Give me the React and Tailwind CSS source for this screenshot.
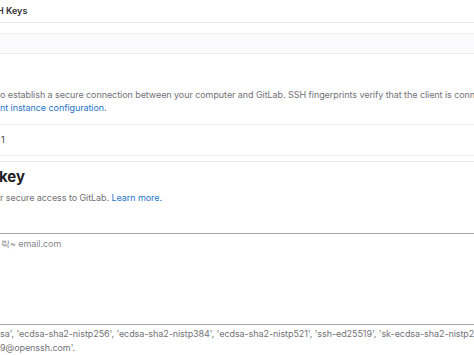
export default function App() {
  return (
    <div className="w-[474px] h-[355px] overflow-hidden bg-white font-['Inter',sans-serif] text-[#3a383f]">
      {/* breadcrumb */}
      <div className="h-[23px] flex items-center border-b border-[#ececef]">
        <span className="-ml-[3px] text-[9px] font-semibold text-[#333238] whitespace-nowrap">H Keys</span>
      </div>
      <div className="mt-[10px] h-[21px] bg-[#fbfafd] border-y border-[#ececef]" />

      {/* intro */}
      <div className="mt-[34px] text-[9px] leading-[13px] tracking-[-0.07px] text-[#737278] whitespace-nowrap">
        <p>o establish a secure connection between your computer and GitLab. SSH fingerprints verify that the client is conn</p>
        <p>
          <span className="text-[#1f75cb]">nt instance configuration</span>.
        </p>
      </div>

      {/* keys row */}
      <div className="mt-[10px] h-[32px] flex items-center border-y border-[#ececef] text-[9px] text-[#3a383f]">
        <span className="ml-[1px]">1</span>
      </div>

      {/* add key */}
      <div className="mt-[5px] border-t border-[#ececef] pt-[5px]">
        <h2 className="text-[15px] leading-[20px] font-bold text-[#1f1e24] -ml-[1px] whitespace-nowrap">key</h2>
        <p className="mt-[4px] text-[9px] leading-[13px] tracking-[-0.07px] text-[#737278] whitespace-nowrap">
          r secure access to GitLab. <span className="text-[#1f75cb]">Learn more.</span>
        </p>
        <div className="mt-[29px] -ml-[10px] w-[520px] h-[92px] border border-[#a4a3a8] rounded-[3px] pl-[10px] pt-[3px]">
          <p className="text-[9px] leading-[13px] tracking-[-0.07px] text-[#89888d] whitespace-nowrap">
            락~ email.com
          </p>
        </div>
        <div className="mt-[2px] text-[9px] leading-[14px] tracking-[-0.07px] text-[#737278] whitespace-nowrap">
          <p>sa', 'ecdsa-sha2-nistp256', 'ecdsa-sha2-nistp384', 'ecdsa-sha2-nistp521', 'ssh-ed25519', 'sk-ecdsa-sha2-nistp2</p>
          <p>9@openssh.com'.</p>
        </div>
      </div>
    </div>
  );
}
